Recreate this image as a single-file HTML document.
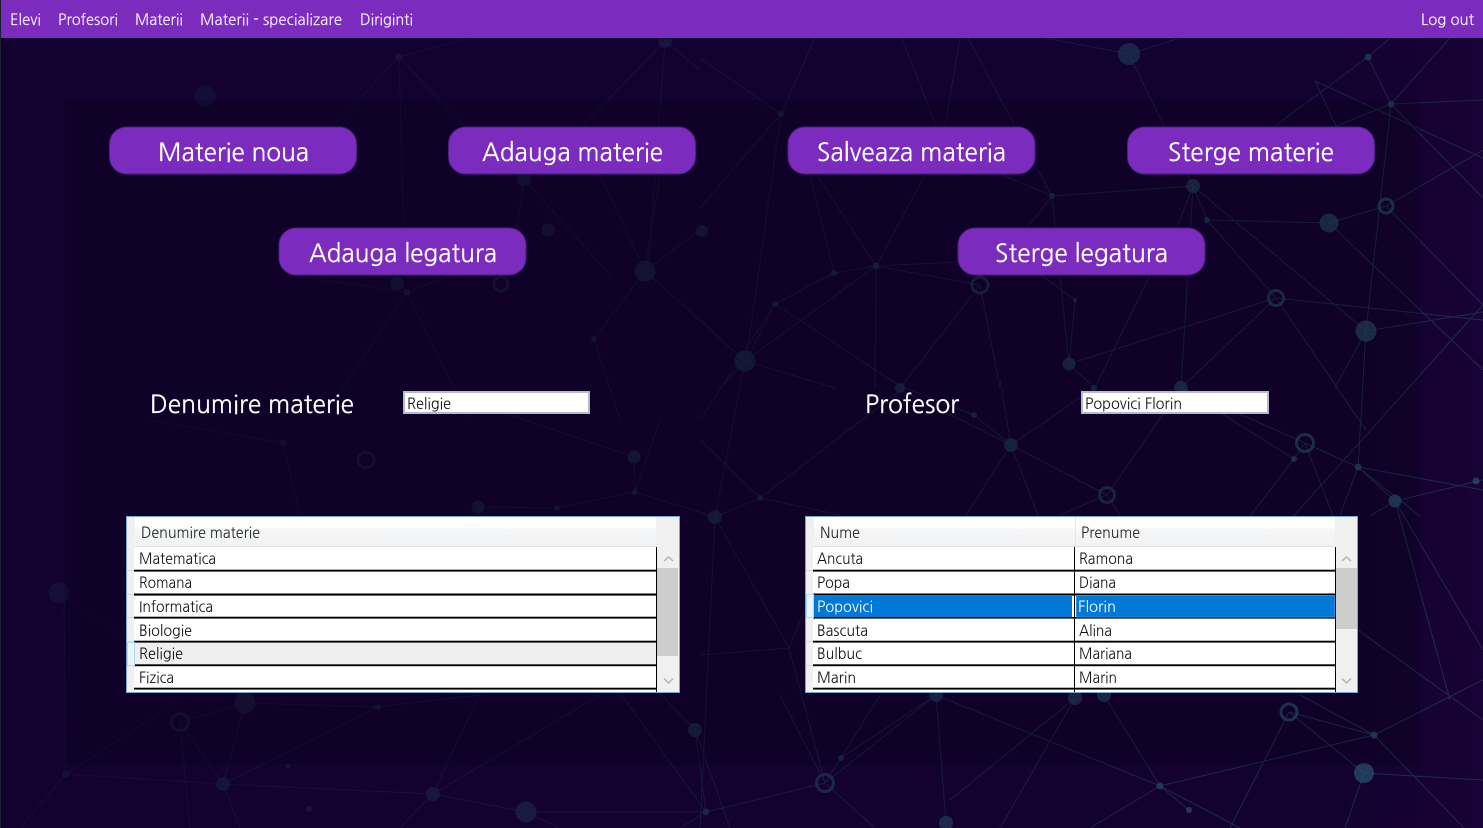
<!DOCTYPE html>
<html><head><meta charset="utf-8"><title>Materii</title>
<style>
html,body{margin:0;padding:0;width:1483px;height:828px;overflow:hidden;background:#120230}
svg{display:block}
text{font-family:"NanumGothic","Noto Sans CJK KR","Liberation Sans",sans-serif}
.n{font-size:15px;fill:#f4ecfb;stroke:#f4ecfb;stroke-width:.15px}
.b{font-size:25px;fill:#fff;stroke:#fff;stroke-width:.25px}
.t{font-size:15px;fill:#111}
.h{font-size:15px;fill:#222}
</style></head><body>
<svg width="1483" height="828" viewBox="0 0 1483 828" xmlns="http://www.w3.org/2000/svg">
<defs>
<linearGradient id="bg" x1="0" y1="0" x2="1" y2="0"><stop offset="0" stop-color="#130230"/><stop offset=".9" stop-color="#130230"/><stop offset="1" stop-color="#170335"/></linearGradient>
<linearGradient id="g" gradientUnits="userSpaceOnUse" x1="150" y1="120" x2="1350" y2="640"><stop offset="0" stop-color="#15103a"/><stop offset=".4" stop-color="#191e42"/><stop offset=".8" stop-color="#203a58"/><stop offset="1" stop-color="#28506c"/></linearGradient>
<linearGradient id="hd" x1="0" y1="0" x2="0" y2="1"><stop offset="0" stop-color="#fff"/><stop offset=".38" stop-color="#fff"/><stop offset=".4" stop-color="#f6f7f8"/><stop offset="1" stop-color="#f2f3f4"/></linearGradient>
</defs>
<rect width="1483" height="828" fill="url(#bg)"/>
<path stroke="url(#g)" stroke-opacity=".5" fill="none" stroke-width="1" d="M1129 54L1045 38M1129 54L1180 38M1129 54L1193 186M1368 57L1391 104M1368 57L1275 126M1368 57L1390 38M1391 104L1450 38M1391 104L1483 100M1391 104L1336 126M1391 104L1366 331M1391 104L1483 198M1315 81L1483 158M1315 81L1336 126M781 114L700 58M781 114L815 38M781 114L746 361M781 114L700 208M902 38L936 126M960 38L945 126M968 38L1052 196M1052 196L1193 186M1052 196L1069 364M1052 196L1027 228M1052 196L1000 174M1193 186L1160 272M1193 186L1181 388M1193 186L1366 331M1193 186L1207 220M1207 220L1329 223M1207 220L1276 298M1329 223L1386 206M1329 223L1483 370M1386 206L1483 150M1386 206L1483 305M876 266L745 361M876 266L980 285M876 266L925 175M876 266L817 175M876 266L958 262M876 266L875 388M876 266L834 273M834 273L775 304M834 273L810 175M775 304L700 420M775 304L746 361M775 304L900 386M980 285L1000 388M980 285L900 388M745 361L835 388M745 361L720 388M745 361L700 320M1075 300L1069 364M1075 300L1000 245M1069 364L1276 298M1069 364L1095 388M1095 388L1150 275M1276 298L1483 320M1276 298L1181 388M1276 298L1366 430M1366 331L1483 312M1366 331L1335 388M1366 331L1358 467M1011 445L901 390M1011 445L1094 388M1011 445L974 415M1011 445L966 515M1011 445L1038 515M1011 445L1107 495M1011 445L1000 380M900 386L974 415M1305 443L1358 467M1305 443L1181 388M1305 443L1333 516M1358 467L1483 490M1358 467L1340 515M1358 467L1395 501M1358 467L1420 516M1395 501L1483 480M1395 501L1483 650M1395 501L1450 700M1395 501L1370 516M1483 305L1290 520M1107 495L1181 388M1107 495L1060 515M1107 495L1120 515M1294 459L1250 516M1294 459L1305 443M1294 459L1181 388M760 498L700 440M760 498L715 517M760 498L901 390M760 498L840 515M715 517L789 648M715 517L745 361M715 517L700 830M715 517L635 492M936 695L1160 786M936 695L946 823M936 695L841 758M1075 698L1000 828M1075 698L950 800M1104 695L1160 786M1160 786L1374 735M1160 786L1189 810M1160 786L1090 828M1160 786L1240 828M1289 712L1374 735M1289 712L1364 773M1289 712L1230 828M1374 735L1483 680M1374 735L1464 828M1364 773L1483 780M1364 773L1345 828M1374 735L1300 695M1358 630L1483 720M825 783L706 812M825 783L789 648M825 783L875 828M825 783L936 695M825 783L780 695M706 812L680 828M841 758L825 783M841 758L880 695M789 648L700 655M789 648L805 610M66 774L223 784M66 774L180 700M223 784L433 794M223 784L378 707M223 784L245 703M433 794L526 812M433 794L480 693M433 794L600 695M706 812L526 812M706 812L620 693M706 812L695 730M695 730L660 693M695 730L730 828M180 722L245 703M180 722L223 784M245 703L378 707M378 707L480 695M66 774L64 600M66 774L20 828M223 784L240 828M283 443L300 515M283 443L150 420M634 457L635 492M634 457L510 415M635 492L557 508M635 492L660 420M478 507L557 508M645 271L594 339M645 271L660 175M645 271L600 175M645 271L745 361M645 271L700 230M407 292L295 276M407 292L450 275M407 292L335 400M407 292L470 420M524 179L610 275M524 179L517 228M399 57L330 130M399 57L405 275M399 57L470 38M399 57L465 127M665 41L582 127M665 41L648 270M665 41L700 70M594 339L620 420M180 722L190 828M433 794L400 828M526 812L560 828M59 593L130 640"/>
<g fill="url(#g)" fill-opacity=".72">
<circle cx="1129" cy="54" r="11"/><circle cx="1368" cy="57" r="3.5"/><circle cx="1391" cy="104" r="3.5"/><circle cx="781" cy="114" r="3"/><circle cx="1193" cy="186" r="7"/><circle cx="1052" cy="196" r="3"/><circle cx="1329" cy="223" r="9.5"/><circle cx="1207" cy="220" r="3"/><circle cx="876" cy="266" r="3.5"/><circle cx="834" cy="273" r="3"/><circle cx="775" cy="304" r="3"/><circle cx="1075" cy="300" r="2"/><circle cx="1366" cy="331" r="10.5"/><circle cx="745" cy="361" r="10.5"/><circle cx="1069" cy="364" r="6.5"/><circle cx="702" cy="231" r="6"/><circle cx="645" cy="271" r="10.5"/><circle cx="900" cy="388" r="5"/><circle cx="1181" cy="388" r="7"/><circle cx="1094" cy="388" r="3"/>
<circle cx="1011" cy="445" r="7"/><circle cx="974" cy="415" r="3"/><circle cx="1358" cy="467" r="3.5"/><circle cx="1476" cy="481" r="3.5"/><circle cx="1395" cy="501" r="6.5"/><circle cx="1294" cy="459" r="3"/><circle cx="760" cy="498" r="3"/><circle cx="715" cy="517" r="7"/><circle cx="1374" cy="735" r="3.5"/><circle cx="1364" cy="773" r="10"/><circle cx="1160" cy="786" r="3.5"/><circle cx="706" cy="812" r="3.5"/><circle cx="1189" cy="810" r="3"/><circle cx="946" cy="823" r="7"/><circle cx="841" cy="758" r="3"/><circle cx="936" cy="695" r="7"/><circle cx="1075" cy="698" r="7"/><circle cx="1104" cy="695" r="7"/>
<circle cx="59" cy="593" r="10.5"/><circle cx="283" cy="443" r="3.5"/><circle cx="634" cy="457" r="6.5"/><circle cx="635" cy="492" r="3"/><circle cx="478" cy="507" r="6.5"/><circle cx="557" cy="508" r="3"/><circle cx="245" cy="703" r="10.5"/><circle cx="378" cy="707" r="3"/><circle cx="695" cy="730" r="7"/><circle cx="66" cy="774" r="3.5"/><circle cx="223" cy="784" r="7"/><circle cx="288" cy="766" r="2.5"/><circle cx="433" cy="794" r="7"/><circle cx="526" cy="812" r="10.5"/><circle cx="309" cy="809" r="3"/>
<circle cx="205" cy="96" r="10.5"/><circle cx="399" cy="57" r="3.5"/><circle cx="665" cy="41" r="7"/><circle cx="524" cy="179" r="7"/><circle cx="548" cy="230" r="6.5"/><circle cx="407" cy="292" r="3.5"/><circle cx="397" cy="283" r="7"/><circle cx="594" cy="339" r="3"/>
</g>
<g fill="none" stroke="url(#g)" stroke-width="3" stroke-opacity=".75">
<circle cx="1386" cy="206" r="7"/><circle cx="980" cy="285" r="8"/><circle cx="1276" cy="298" r="7.5"/><circle cx="1305" cy="443" r="8.5"/><circle cx="1107" cy="495" r="7.5"/><circle cx="1289" cy="712" r="8"/><circle cx="825" cy="783" r="8.5"/><circle cx="366" cy="460" r="8"/><circle cx="180" cy="722" r="8.5"/><circle cx="501" cy="284" r="7"/>
</g>
<rect x="65" y="100" width="1355" height="665" fill="#000" fill-opacity=".16"/>
<rect x="0" y="0" width="1" height="828" fill="#1c2030"/>

<!-- top nav -->
<rect x="1" y="0" width="1482" height="38" fill="#7b2cbf"/>
<text class="n" x="10" y="25" textLength="31" lengthAdjust="spacingAndGlyphs">Elevi</text>
<text class="n" x="58" y="25" textLength="60" lengthAdjust="spacingAndGlyphs">Profesori</text>
<text class="n" x="135" y="25" textLength="48" lengthAdjust="spacingAndGlyphs">Materii</text>
<text class="n" x="200" y="25" textLength="142" lengthAdjust="spacing">Materii - specializare</text>
<text class="n" x="360" y="25" textLength="53" lengthAdjust="spacingAndGlyphs">Diriginti</text>
<text class="n" x="1421" y="25" textLength="53" lengthAdjust="spacingAndGlyphs">Log out</text>

<!-- buttons -->
<g fill="#7b2cbf" stroke="#4e2080" stroke-width="1">
<rect x="109.5" y="127" width="247" height="47" rx="17"/>
<rect x="448.5" y="127" width="247" height="47" rx="17"/>
<rect x="788" y="127" width="247" height="47" rx="17"/>
<rect x="1127.5" y="127" width="247" height="47" rx="17"/>
<rect x="279" y="228" width="247" height="47" rx="17"/>
<rect x="958" y="228" width="247" height="47" rx="17"/>
</g>
<text class="b" x="158" y="161" textLength="151" lengthAdjust="spacingAndGlyphs">Materie noua</text>
<text class="b" x="482" y="161" textLength="181" lengthAdjust="spacingAndGlyphs">Adauga materie</text>
<text class="b" x="817" y="161" textLength="189" lengthAdjust="spacingAndGlyphs">Salveaza materia</text>
<text class="b" x="1168" y="161" textLength="166" lengthAdjust="spacingAndGlyphs">Sterge materie</text>
<text class="b" x="309" y="262" textLength="188" lengthAdjust="spacingAndGlyphs">Adauga legatura</text>
<text class="b" x="995" y="262" textLength="173" lengthAdjust="spacingAndGlyphs">Sterge legatura</text>

<!-- labels & inputs -->
<text class="b" x="150" y="413" textLength="204" lengthAdjust="spacingAndGlyphs">Denumire materie</text>
<text class="b" x="865" y="413" textLength="94" lengthAdjust="spacingAndGlyphs">Profesor</text>
<rect x="404" y="392" width="185" height="21" fill="#fff" stroke="#b9b9c9" stroke-width="2"/>
<rect x="1082" y="392" width="186" height="21" fill="#fff" stroke="#b9b9c9" stroke-width="2"/>
<text class="t" x="407" y="409" textLength="44" lengthAdjust="spacingAndGlyphs">Religie</text>
<text class="t" x="1085" y="409" textLength="97" lengthAdjust="spacingAndGlyphs">Popovici Florin</text>

<!-- left table -->
<rect x="126.5" y="516.5" width="553" height="176" fill="#f0f0f0" stroke="#7ba6cf"/>
<rect x="135" y="517" width="521" height="29" fill="url(#hd)"/>
<rect x="135" y="546" width="521" height="1" fill="#dfe0e2"/>
<rect x="134" y="547" width="522" height="145" fill="#fff"/>
<rect x="135" y="642" width="521" height="23" fill="#efefef"/>
<g fill="#808080"><rect x="134" y="569.4" width="522" height="1"/><rect x="134" y="593" width="522" height="1"/><rect x="134" y="616.4" width="522" height="1"/><rect x="134" y="640.4" width="522" height="1"/><rect x="134" y="664" width="522" height="1"/><rect x="134" y="687.4" width="522" height="1"/></g>
<g fill="#000">
<rect x="134" y="570" width="522" height="1.6"/><rect x="134" y="594" width="522" height="1.6"/><rect x="134" y="617" width="522" height="1.6"/><rect x="134" y="641" width="522" height="1.6"/><rect x="134" y="664.6" width="522" height="1.6"/><rect x="134" y="688" width="522" height="1.6"/>
<rect x="656" y="547" width="1" height="145"/>
</g>
<g fill="#d8d8d8"><rect x="127" y="570" width="7" height="1"/><rect x="127" y="594" width="7" height="1"/><rect x="127" y="617" width="7" height="1"/><rect x="127" y="641" width="7" height="1"/><rect x="127" y="665" width="7" height="1"/></g>
<rect x="127.5" y="642.5" width="7" height="23" fill="#eaf6fd" stroke="#a8dcf8"/>
<rect x="657" y="568" width="21" height="88" fill="#cdcdcd"/>
<path d="M664 561l4.500-4 4.500 4M664 678.500l4.500 4.500 4.500-4.500" fill="none" stroke="#b4b4b4" stroke-width="1.500"/>
<text class="h" x="141" y="538" textLength="119" lengthAdjust="spacingAndGlyphs">Denumire materie</text>
<text class="t" x="139" y="564" textLength="77" lengthAdjust="spacingAndGlyphs">Matematica</text>
<text class="t" x="139" y="588" textLength="53" lengthAdjust="spacingAndGlyphs">Romana</text>
<text class="t" x="139" y="612" textLength="74" lengthAdjust="spacingAndGlyphs">Informatica</text>
<text class="t" x="139" y="636" textLength="53" lengthAdjust="spacingAndGlyphs">Biologie</text>
<text class="t" x="139" y="659" textLength="44" lengthAdjust="spacingAndGlyphs">Religie</text>
<text class="t" x="139" y="683" textLength="35" lengthAdjust="spacingAndGlyphs">Fizica</text>

<!-- right table -->
<rect x="805.500" y="516.5" width="552" height="176" fill="#f0f0f0" stroke="#7ba6cf"/>
<rect x="814" y="517" width="521" height="29" fill="url(#hd)"/>
<rect x="814" y="546" width="521" height="1" fill="#dfe0e2"/>
<rect x="1075" y="517" width="1" height="29" fill="#e6e7e8"/>
<rect x="813" y="547" width="522" height="145" fill="#fff"/>
<g fill="#808080"><rect x="813" y="569.4" width="522" height="1"/><rect x="813" y="593" width="522" height="1"/><rect x="813" y="640.4" width="522" height="1"/><rect x="813" y="664" width="522" height="1"/><rect x="813" y="687.4" width="522" height="1"/></g>
<g fill="#000">
<rect x="813" y="570" width="522" height="1.6"/><rect x="813" y="594" width="522" height="1.6"/><rect x="813" y="617" width="522" height="1.6"/><rect x="813" y="641" width="522" height="1.6"/><rect x="813" y="664.6" width="522" height="1.6"/><rect x="813" y="688" width="522" height="1.6"/>
<rect x="1074" y="547" width="1" height="145"/><rect x="1335" y="547" width="1" height="145"/>
</g>
<rect x="814" y="596" width="258" height="21" fill="#0078d7"/>
<rect x="1076.500" y="595.5" width="258" height="21.500" fill="#0078d7" stroke="#2e8fe3"/>
<g fill="#d8d8d8"><rect x="806" y="570" width="7" height="1"/><rect x="806" y="641" width="7" height="1"/><rect x="806" y="665" width="7" height="1"/></g>
<rect x="806.500" y="594.5" width="7" height="23" fill="#eaf6fd" stroke="#a8dcf8"/>
<rect x="1336" y="568" width="21" height="61" fill="#cdcdcd"/>
<path d="M1342 561l4.500-4 4.500 4M1342 678.500l4.500 4.500 4.500-4.500" fill="none" stroke="#b4b4b4" stroke-width="1.500"/>
<text class="h" x="820" y="538" textLength="40" lengthAdjust="spacingAndGlyphs">Nume</text>
<text class="h" x="1081" y="538" textLength="59" lengthAdjust="spacingAndGlyphs">Prenume</text>
<text class="t" x="817" y="564" textLength="46" lengthAdjust="spacingAndGlyphs">Ancuta</text>
<text class="t" x="817" y="588" textLength="33" lengthAdjust="spacingAndGlyphs">Popa</text>
<text class="t" x="817" y="612" textLength="56" lengthAdjust="spacingAndGlyphs" style="fill:#fff">Popovici</text>
<text class="t" x="817" y="636" textLength="51" lengthAdjust="spacingAndGlyphs">Bascuta</text>
<text class="t" x="817" y="659" textLength="45" lengthAdjust="spacingAndGlyphs">Bulbuc</text>
<text class="t" x="817" y="683" textLength="39" lengthAdjust="spacingAndGlyphs">Marin</text>
<text class="t" x="1079" y="564" textLength="54" lengthAdjust="spacingAndGlyphs">Ramona</text>
<text class="t" x="1079" y="588" textLength="37" lengthAdjust="spacingAndGlyphs">Diana</text>
<text class="t" x="1078" y="612" textLength="38" lengthAdjust="spacingAndGlyphs" style="fill:#fff">Florin</text>
<text class="t" x="1079" y="636" textLength="33" lengthAdjust="spacingAndGlyphs">Alina</text>
<text class="t" x="1079" y="659" textLength="53" lengthAdjust="spacingAndGlyphs">Mariana</text>
<text class="t" x="1079" y="683" textLength="38" lengthAdjust="spacingAndGlyphs">Marin</text>
</svg>
</body></html>
